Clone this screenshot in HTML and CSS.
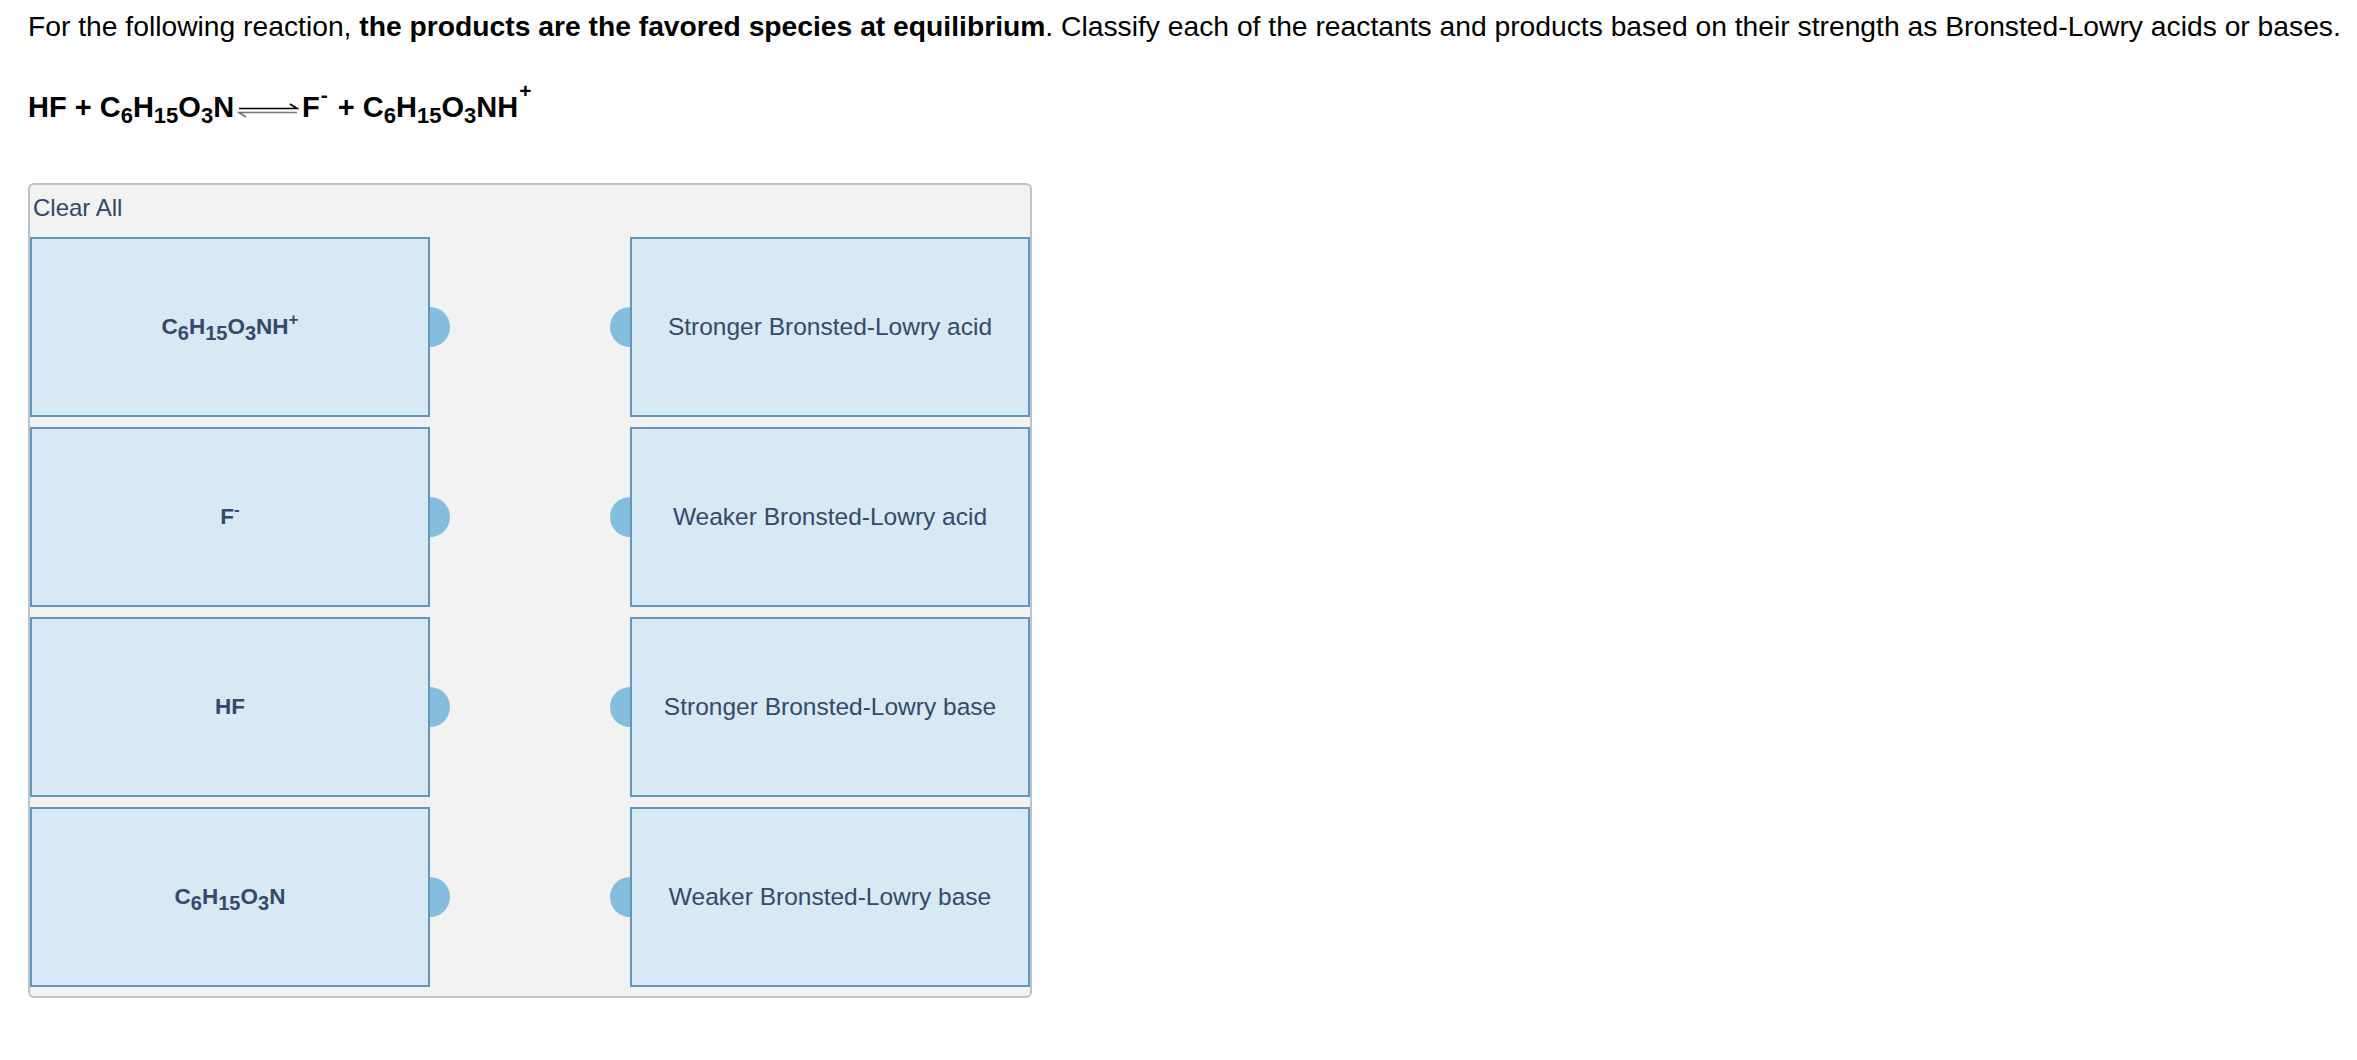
FILE: index.html
```html
<!DOCTYPE html>
<html>
<head>
<meta charset="utf-8">
<link rel="stylesheet" href="styles.css">
</head>
<body>
<div class="page">
  <p class="prompt">For the following reaction, <b>the products are the favored species at equilibrium</b>. Classify each of the reactants and products based on their strength as Bronsted-Lowry acids or bases.</p>
  <p class="equation">HF + C<sub>6</sub>H<sub>15</sub>O<sub>3</sub>N<svg class="eq-arrow" width="62" height="20" viewBox="0 0 62 20"><path d="M2 8.5 H60 L53 4" fill="none" stroke="#000" stroke-width="1.6"/><path d="M60 12.5 H2 L9 17" fill="none" stroke="#777" stroke-width="1.6"/></svg>F<sup class="minus">-</sup> + C<sub>6</sub>H<sub>15</sub>O<sub>3</sub>NH<sup class="plus">+</sup></p>

  <div class="board">
    <div class="clear">Clear All</div>
    <div class="grid">
      <div class="card left chem">C<sub>6</sub>H<sub>15</sub>O<sub>3</sub>NH<sup>+</sup></div>
      <div class="card right">Stronger Bronsted-Lowry acid</div>
      <div class="card left chem">F<sup>-</sup></div>
      <div class="card right">Weaker Bronsted-Lowry acid</div>
      <div class="card left chem">HF</div>
      <div class="card right">Stronger Bronsted-Lowry base</div>
      <div class="card left chem">C<sub>6</sub>H<sub>15</sub>O<sub>3</sub>N</div>
      <div class="card right">Weaker Bronsted-Lowry base</div>
    </div>
  </div>
</div>
</body>
</html>
```

FILE: styles.css
```css
html, body {
  margin: 0;
  padding: 0;
  background: #ffffff;
}

body {
  font-family: "Liberation Sans", Arial, sans-serif;
  color: #000;
}

.page {
  padding: 11px 0 0 28px;
}

.prompt {
  margin: 0;
  font-size: 28.25px;
  line-height: 30px;
  white-space: nowrap;
}

.equation {
  margin: 50px 0 0 0;
  height: 32px;
  font-size: 29px;
  font-weight: bold;
  line-height: 32px;
  display: flex;
  align-items: baseline;
}

.equation sub {
  font-size: 22px;
  position: relative;
  top: 6px;
  vertical-align: baseline;
}

.equation sup {
  font-size: 21px;
  vertical-align: baseline;
  position: relative;
}

.equation sup.minus {
  top: -15px;
  margin-right: 10px;
  margin-left: 1px;
}

.equation sup.plus {
  top: -19px;
  margin-left: 1px;
}

.eq-arrow {
  align-self: center;
  margin: 5px 3px 0 3px;
}

.board {
  box-sizing: border-box;
  width: 1004px;
  margin-top: 60px;
  border: 2px solid #b9c3cd;
  border-radius: 6px;
  background: #f2f2f2;
  padding-bottom: 9px;
}

.clear {
  height: 52px;
  padding-left: 3px;
  font-size: 24px;
  line-height: 46px;
  color: #2d4a6c;
}

.grid {
  display: grid;
  grid-template-columns: 400px 400px;
  column-gap: 200px;
  row-gap: 10px;
}

.card {
  position: relative;
  box-sizing: border-box;
  height: 180px;
  border: 2px solid #6196bd;
  background: #d6e9f4;
  color: #34496b;
  font-size: 24.5px;
  display: flex;
  align-items: center;
  justify-content: center;
}

.card.chem {
  font-weight: bold;
  font-size: 22.5px;
}

.card sub {
  font-size: 20px;
  vertical-align: baseline;
  position: relative;
  top: 6px;
}

.card sup {
  font-size: 17px;
  vertical-align: baseline;
  position: relative;
  top: -7px;
}

.card.left::after,
.card.right::before {
  content: "";
  position: absolute;
  top: 50%;
  width: 20px;
  height: 40px;
  margin-top: -20px;
  background: #85bedc;
}

.card.left::after {
  left: calc(100% + 2px);
  border-radius: 0 20px 20px 0;
}

.card.right::before {
  right: calc(100% + 2px);
  border-radius: 20px 0 0 20px;
}
```
